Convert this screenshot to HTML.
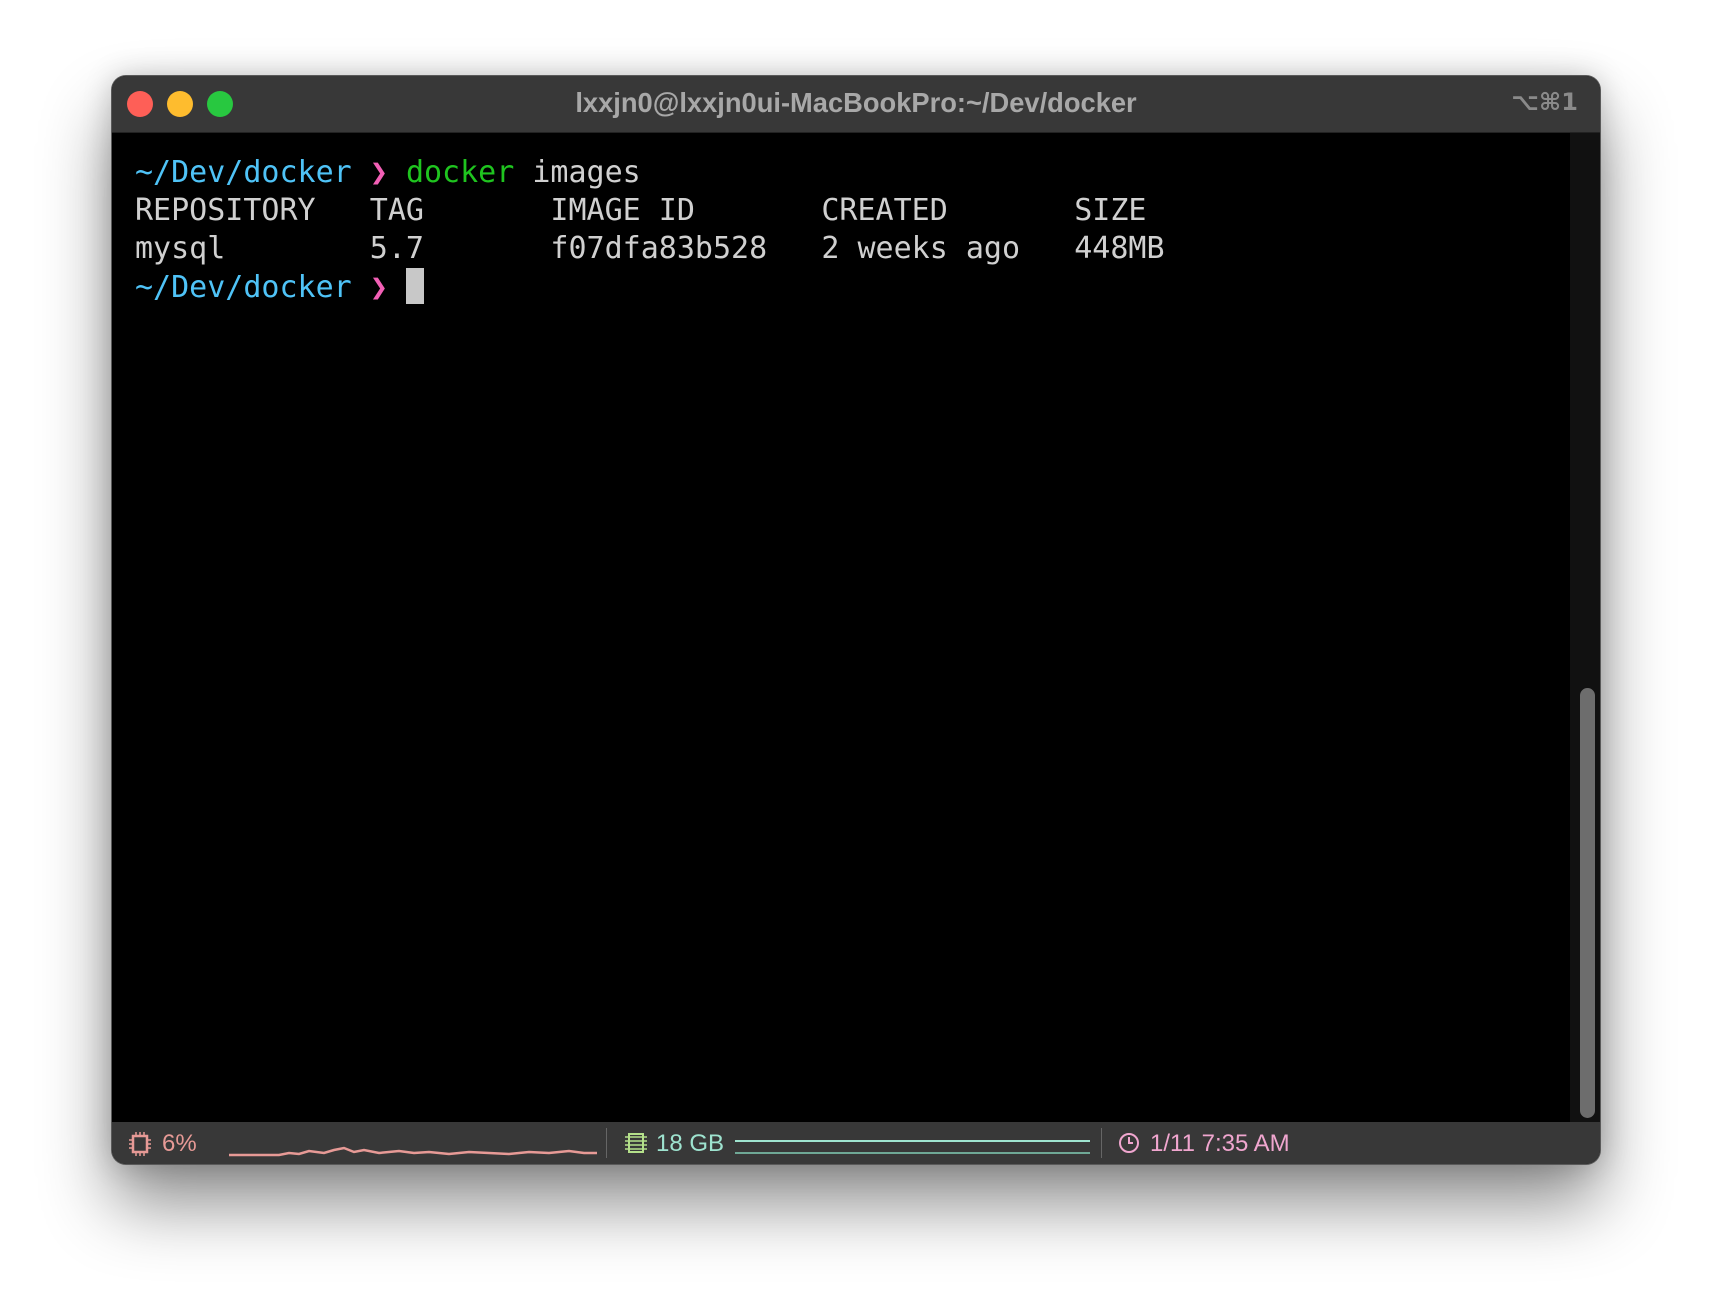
<!DOCTYPE html>
<html><head><meta charset="utf-8"><style>
html,body{margin:0;padding:0;width:1712px;height:1312px;background:#fff;overflow:hidden;}
.win{position:absolute;left:112px;top:76px;width:1488px;height:1088px;border-radius:14px;background:#000;overflow:hidden;
box-shadow:0 0 0 1px #5a5a5a,0 40px 70px rgba(0,0,0,0.45),0 0 30px rgba(0,0,0,0.2);}
.title{position:absolute;left:0;top:0;width:100%;height:56px;background:#383838;border-bottom:1px solid #222;}
.tl{position:absolute;top:15px;width:26px;height:26px;border-radius:50%;}
.ttext{position:absolute;left:0;right:0;top:11px;text-align:center;font:bold 27.3px "Liberation Sans",sans-serif;color:#a8a8a8;}
.kbd{position:absolute;right:22px;top:12px;font:bold 24px "DejaVu Sans","Liberation Sans",sans-serif;color:#8a8a8a;}
.term{position:absolute;left:23px;top:78px;font:30px "DejaVu Sans Mono",monospace;color:#d0d0d0;white-space:pre;line-height:38.2px;}
.c{color:#4fc3f7}.g{color:#1fc41f}.p{color:#f25fb5}
.cursor{position:absolute;left:294px;top:192px;width:18px;height:36px;background:#c8c8c8;}
.gutter{position:absolute;left:1458px;top:57px;width:30px;bottom:42px;background:#111;}
.sb{position:absolute;left:1468px;top:612px;width:15px;height:430px;border-radius:8px;background:#6d6d6d;}
.status{position:absolute;left:0;bottom:0;width:100%;height:42px;background:#383838;font:24px "Liberation Sans",sans-serif;}
.status span{position:absolute;top:8px;}
.sep{position:absolute;top:6px;width:1px;height:30px;background:#666;}
</style></head><body>
<div class="win">
 <div class="title">
  <div class="tl" style="left:15px;background:#fe5f57"></div>
  <div class="tl" style="left:55px;background:#febc2e"></div>
  <div class="tl" style="left:95px;background:#28c840"></div>
  <div class="ttext">lxxjn0@lxxjn0ui-MacBookPro:~/Dev/docker</div>
  <div class="kbd">⌥⌘1</div>
 </div>
 <div class="term"><span class="c">~/Dev/docker</span> <span class="p">❯</span> <span class="g">docker</span> images
REPOSITORY   TAG       IMAGE ID       CREATED       SIZE
mysql        5.7       f07dfa83b528   2 weeks ago   448MB
<span class="c">~/Dev/docker</span> <span class="p">❯</span></div>
 <div class="cursor"></div>
 <div class="gutter"></div>
 <div class="sb"></div>
 <div class="status">
  <svg style="position:absolute;left:17px;top:10px" width="22" height="24" viewBox="0 0 22 24"><rect x="4" y="4" width="14" height="16" fill="none" stroke="#e79a96" stroke-width="2.5"/><g stroke="#e79a96" stroke-width="1.5"><path d="M7 0v4M11 0v4M15 0v4M7 20v4M11 20v4M15 20v4M0 8h4M0 12h4M0 16h4M18 8h4M18 12h4M18 16h4"/></g></svg>
  <span style="left:50px;color:#e79a96">6%</span>
  <svg style="position:absolute;left:117px;top:18px" width="368" height="18"><polyline fill="none" stroke="#e79a96" stroke-width="2.5" points="0,15 50,15 60,13 70,14 80,11 95,13 105,10 115,8 125,12 135,10 150,13 170,11 185,13 200,12 220,14 240,12 260,13 280,14 300,12 320,13 340,11 355,13 368,13"/></svg>
  <div class="sep" style="left:494px"></div>
  <svg style="position:absolute;left:513px;top:10px" width="22" height="22" viewBox="0 0 22 22"><rect x="4" y="2" width="14" height="18" fill="none" stroke="#b4e08a" stroke-width="2"/><path d="M0 5h22M0 9h22M0 13h22M0 17h22" stroke="#b4e08a" stroke-width="1.5"/></svg>
  <span style="left:544px;color:#9ee3cf">18 GB</span>
  <div style="position:absolute;left:623px;top:18px;width:355px;height:2px;background:#9ee3cf"></div>
  <div style="position:absolute;left:623px;top:30px;width:355px;height:2px;background:#6fa896"></div>
  <div class="sep" style="left:989px"></div>
  <svg style="position:absolute;left:1006px;top:10px" width="22" height="22" viewBox="0 0 22 22"><circle cx="11" cy="11" r="9" fill="none" stroke="#f0a6cf" stroke-width="2"/><path d="M11 5v6h4" fill="none" stroke="#f0a6cf" stroke-width="2"/></svg>
  <span style="left:1038px;color:#f0a6cf">1/11 7:35 AM</span>
 </div>
</div>
</body></html>
